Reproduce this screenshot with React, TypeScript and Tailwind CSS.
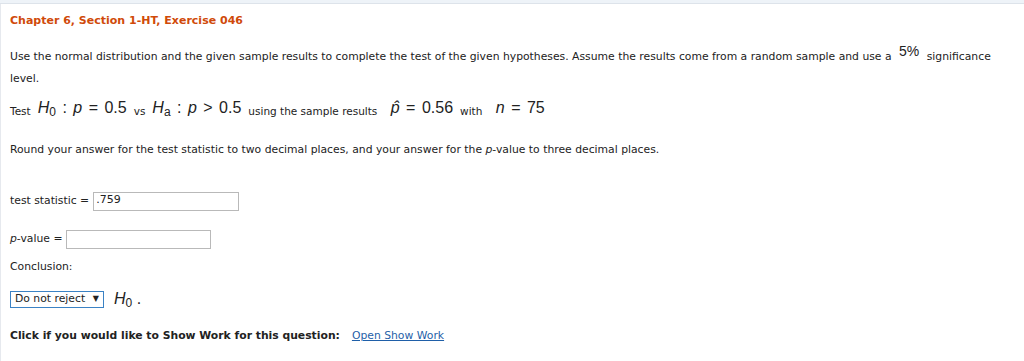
const Math = ({ children }: { children: React.ReactNode }) => (
  <span className="mx-[7px] font-['Liberation_Sans',Arial,sans-serif] text-[16px] text-[#222] [word-spacing:2px]">{children}</span>
);

const Small = ({ children }: { children: React.ReactNode }) => (
  <span className="relative top-[2px] text-[10.5px]">{children}</span>
);

export default function App() {
  return (
    <div className="h-[361px] w-[1024px] overflow-hidden bg-white font-['DejaVu_Sans',Verdana,sans-serif] text-[10.8px] text-[#222]">
      <div className="h-[4px] border-b border-[#dde3ea] bg-[#eef3f8]" />
      <div className="h-[357px] border-l border-[#e6e9ee] pl-[9px] pt-[10px]">
        <h1 className="text-[11px] font-bold leading-[14px] text-[#d04a0a]">Chapter 6, Section 1-HT, Exercise 046</h1>

        <p className="mt-[16px] leading-[22px]">
          Use the normal distribution and the given sample results to complete the test of the given hypotheses. Assume the results come from a random sample and use a{" "}
          <span className="relative -top-[4px] mx-[4px] font-['Liberation_Sans',Arial,sans-serif] text-[14px]">5%</span>{" "}
          significance
          <br />
          level.
        </p>

        <p className="mt-[9px] leading-[18px]">
          <Small>Test</Small>
          <Math>
            <i>H</i>
            <sub className="text-[12px]">0</sub> : <i>p</i> = 0.5
          </Math>
          <Small>vs</Small>
          <Math>
            <i>H</i>
            <sub className="text-[12px]">a</sub> : <i>p</i> &gt; 0.5
          </Math>
          <Small>using the sample results</Small>
          <Math>
            {" "}<i>p̂</i> = 0.56
          </Math>
          <Small>with</Small>
          <Math>
            {" "}<i>n</i> = 75
          </Math>
        </p>

        <p className="mt-[24px] leading-[14px]">
          Round your answer for the test statistic to two decimal places, and your answer for the <i>p</i>-value to three decimal places.
        </p>

        <div className="mt-[35px] flex items-center gap-[4px]">
          <span>test statistic =</span>
          <div className="h-[19px] w-[146px] border border-[#b9b9b9] px-[2px] text-[11px] leading-[14px]">.759</div>
        </div>

        <div className="mt-[19px] flex items-center gap-[4px]">
          <span>
            <i>p</i>-value =
          </span>
          <div className="h-[19px] w-[145px] border border-[#b9b9b9]" />
        </div>

        <div className="mt-[11px] leading-[14px]">Conclusion:</div>

        <div className="mt-[13px] flex items-center gap-[10px]">
          <div className="flex h-[17px] w-[94px] items-center justify-between border border-[#3b82c4] px-[4px]">
            <span>Do not reject</span>
            <span className="text-[8px]">▼</span>
          </div>
          <span className="font-['Liberation_Sans',Arial,sans-serif] text-[16px]">
            <i>H</i>
            <sub className="text-[12px]">0</sub> .
          </span>
        </div>

        <div className="mt-[17px] flex items-center gap-[12px]">
          <span className="font-bold">Click if you would like to Show Work for this question:</span>
          <a className="text-[#1f5fa8] underline" href="#">Open Show Work</a>
        </div>
      </div>
    </div>
  );
}
